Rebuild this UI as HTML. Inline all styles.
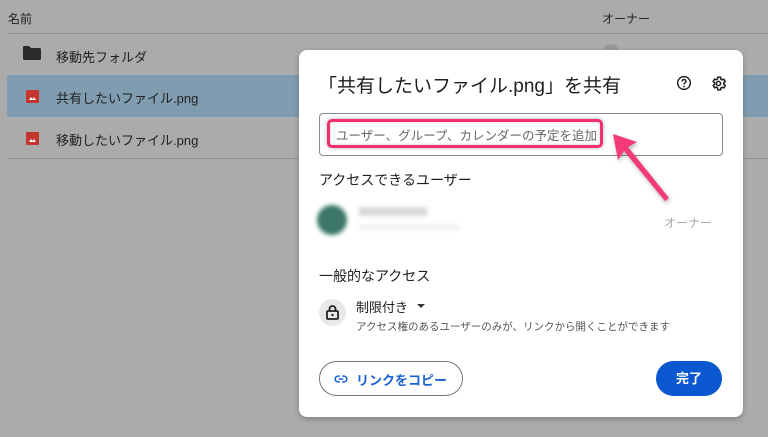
<!DOCTYPE html>
<html><head><meta charset="utf-8"><style>
*{margin:0;padding:0;box-sizing:border-box}
body{width:768px;height:437px;overflow:hidden;background:#ababab;font-family:"Liberation Sans","Noto Sans CJK JP",sans-serif;position:relative;color:#202124}
.abs{position:absolute}
.line{position:absolute;left:7px;right:0;height:1px;background:#8e8e8e}
.row{position:absolute;left:7px;right:0;height:42px}
.rt{position:absolute;left:56px;font-size:13px;color:#1f1f1f;top:13px}
.img{position:absolute;left:19px;top:15px;width:13px;height:13px}
</style></head><body>
<div class="abs" style="left:8px;top:10px;font-size:12px;color:#222">名前</div>
<div class="abs" style="left:602px;top:10px;font-size:12px;color:#222">オーナー</div>
<div class="line" style="top:33px"></div>
<div class="row" style="top:34px"><svg class="abs" style="left:16px;top:12px" width="18" height="14" viewBox="0 0 18 14"><path d="M0 1.5A1.5 1.5 0 0 1 1.5 0H6l2 2h8.5A1.5 1.5 0 0 1 18 3.5v9a1.5 1.5 0 0 1-1.5 1.5h-15A1.5 1.5 0 0 1 0 12.5z" fill="#2a2a2a"/></svg><div class="rt" style="left:49px">移動先フォルダ</div></div>
<div class="row" style="top:75px;background:#7f9cb0"><svg class="img" viewBox="0 0 13 13"><rect width="13" height="13" rx="1" fill="#c5372e"/><path d="M3 10l2-3 1.5 2 1.5-2 2 3z" fill="#fff"/></svg><div class="rt" style="left:49px">共有したいファイル.png</div></div>
<div class="row" style="top:117px"><svg class="img" viewBox="0 0 13 13"><rect width="13" height="13" rx="1" fill="#c5372e"/><path d="M3 10l2-3 1.5 2 1.5-2 2 3z" fill="#fff"/></svg><div class="rt" style="left:49px">移動したいファイル.png</div></div>
<div class="line" style="top:158px"></div>
<div class="abs" style="left:603px;top:44px;width:16px;height:16px;border-radius:50%;background:#999"></div>

<div class="abs" style="left:299px;top:50px;width:444px;height:367px;background:#fff;border-radius:8px;box-shadow:0 2px 6px rgba(0,0,0,.25)">
 <div class="abs" style="left:19px;top:21px;font-size:19px;color:#1f1f1f">「共有したいファイル.png」を共有</div>
 <svg class="abs" style="left:377px;top:25px" width="16" height="16" viewBox="0 0 24 24"><circle cx="12" cy="12" r="9.5" fill="none" stroke="#222" stroke-width="2.2"/><path d="M9.2 9.5a2.8 2.8 0 1 1 4 2.5c-1 .5-1.2 1.2-1.2 2.2" fill="none" stroke="#222" stroke-width="2.2"/><circle cx="12" cy="17.3" r="1.3" fill="#222"/></svg>
 <svg class="abs" style="left:411px;top:25px" width="17" height="17" viewBox="0 0 24 24"><path d="M19.4 13a7.5 7.5 0 0 0 0-2l2.1-1.6-2-3.5-2.5 1a7 7 0 0 0-1.7-1L15 3h-4l-.4 2.7a7 7 0 0 0-1.7 1l-2.5-1-2 3.5L6.6 11a7.5 7.5 0 0 0 0 2l-2.1 1.6 2 3.5 2.5-1a7 7 0 0 0 1.7 1L11 21h4l.4-2.7a7 7 0 0 0 1.7-1l2.5 1 2-3.5z" fill="none" stroke="#222" stroke-width="2.2" stroke-linejoin="round"/><circle cx="12" cy="12" r="3" fill="none" stroke="#222" stroke-width="2.2"/></svg>
 <div class="abs" style="left:20px;top:63px;width:404px;height:43px;border:1px solid #8a8a8a;border-radius:4px"></div>
 <div class="abs" style="left:28px;top:69px;width:276px;height:29px;border:3px solid #f0306a;border-radius:5px;box-shadow:0 0 4px rgba(0,0,0,.3),inset 0 0 3px rgba(0,0,0,.2)"></div>
 <div class="abs" style="left:37px;top:75px;font-size:12.5px;color:#666">ユーザー、グループ、カレンダーの予定を追加</div>
 <svg class="abs" style="left:306px;top:80px" width="70" height="75" viewBox="0 0 70 75"><path d="M8 4 L32 12 L23 17 L64 68 L60 71 L19 21 L13 30 Z" fill="#f43a78" style="filter:drop-shadow(1px 2px 2px rgba(0,0,0,.3))"/></svg>
 <div class="abs" style="left:20px;top:120px;font-size:14px;color:#1f1f1f">アクセスできるユーザー</div>
 <div class="abs" style="left:18px;top:155px;width:30px;height:30px;border-radius:50%;background:#3c7668;filter:blur(2px)"></div>
 <div class="abs" style="left:60px;top:157px;width:68px;height:9px;background:#d8d8d8;filter:blur(2px)"></div>
 <div class="abs" style="left:60px;top:175px;width:100px;height:5px;background:#eee;filter:blur(2px)"></div>
 <div class="abs" style="left:365px;top:164px;font-size:12px;color:#aaa">オーナー</div>
 <div class="abs" style="left:20px;top:216px;font-size:14px;color:#1f1f1f">一般的なアクセス</div>
 <div class="abs" style="left:20px;top:249px;width:27px;height:27px;border-radius:50%;background:#e8e8e8"></div>
 <svg class="abs" style="left:26px;top:254px" width="15" height="16" viewBox="0 0 15 16"><rect x="2" y="7" width="11" height="8" rx="1" fill="none" stroke="#222" stroke-width="1.8"/><path d="M4.5 7V5a3 3 0 0 1 6 0v2" fill="none" stroke="#222" stroke-width="1.8"/><circle cx="7.5" cy="11" r="1.2" fill="#222"/></svg>
 <div class="abs" style="left:57px;top:247px;font-size:13px;color:#1f1f1f">制限付き</div>
 <div class="abs" style="left:118px;top:254px;width:0;height:0;border-left:4px solid transparent;border-right:4px solid transparent;border-top:4px solid #333"></div>
 <div class="abs" style="left:57px;top:269px;font-size:10.5px;color:#555">アクセス権のあるユーザーのみが、リンクから開くことができます</div>
 <div class="abs" style="left:20px;top:311px;width:144px;height:35px;border:1px solid #777;border-radius:18px"></div>
 <svg class="abs" style="left:35px;top:322px" width="14" height="14" viewBox="0 0 24 24"><path d="M10 7H7a5 5 0 0 0 0 10h3M14 7h3a5 5 0 0 1 0 10h-3M8 12h8" fill="none" stroke="#1a62d0" stroke-width="2.6"/></svg>
 <div class="abs" style="left:57px;top:320px;font-size:13px;color:#1a62d0;font-weight:bold">リンクをコピー</div>
 <div class="abs" style="left:357px;top:311px;width:66px;height:35px;background:#0b57d0;border-radius:18px;color:#fff;font-size:13px;font-weight:bold;text-align:center;line-height:35px">完了</div>
</div>
</body></html>
